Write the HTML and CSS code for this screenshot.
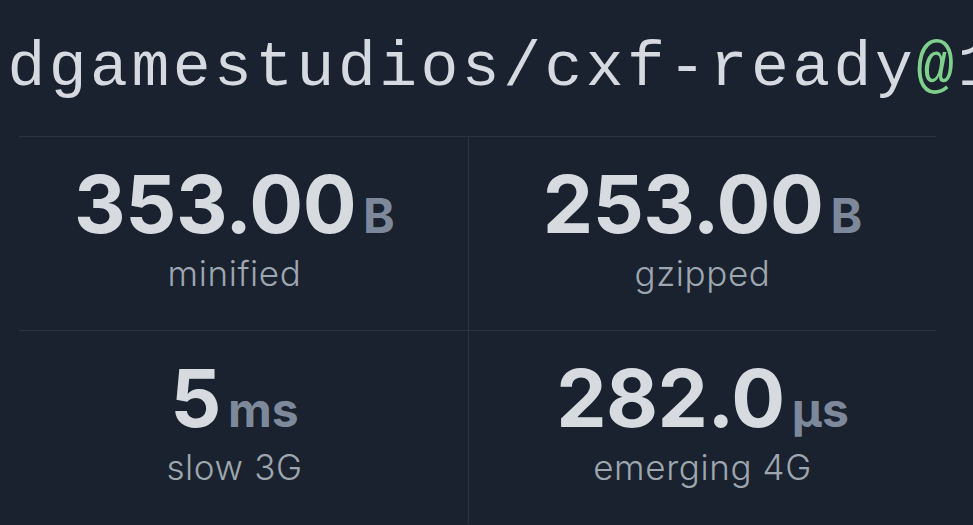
FILE: index.html
```html
<!DOCTYPE html>
<html lang="en">
<head>
<meta charset="utf-8">
<title>@bloodgamestudios/cxf-ready</title>
<link rel="stylesheet" href="styles.css">
</head>
<body>
<main class="page">
  <h1 class="pkg"><span class="pkg-name">@bloodgamestudios/cxf-ready</span><span class="pkg-at">@</span><span class="pkg-ver">1.0.0</span></h1>
  <section class="stats">
    <div class="stat stat-left">
      <div class="stat-value">353.00<span class="stat-unit">B</span></div>
      <div class="stat-label">minified</div>
    </div>
    <div class="stat stat-right">
      <div class="stat-value">253.00<span class="stat-unit">B</span></div>
      <div class="stat-label">gzipped</div>
    </div>
    <div class="stat stat-left">
      <div class="stat-value">5<span class="stat-unit">ms</span></div>
      <div class="stat-label">slow 3G</div>
    </div>
    <div class="stat stat-right">
      <div class="stat-value">282.0<span class="stat-unit">µs</span></div>
      <div class="stat-label">emerging 4G</div>
    </div>
  </section>
</main>
</body>
</html>
```
FILE: styles.css
```css
html, body {
  margin: 0;
  padding: 0;
  background: #19222e;
  overflow: hidden;
}

.page {
  width: 973px;
  height: 525px;
  overflow: hidden;
}

.pkg {
  display: flex;
  justify-content: center;
  white-space: nowrap;
  margin: 34px 0 32px;
  padding-right: 8px;
  font-family: "Liberation Mono", monospace;
  font-weight: 400;
  font-size: 63px;
  line-height: 70px;
  letter-spacing: 3.5px;
  color: #d6dae0;
}

.pkg-at {
  color: #7fd08c;
}

.stats {
  display: grid;
  grid-template-columns: 449px 468px;
  margin-left: 19px;
  width: 917px;
}

.stat {
  border-top: 1px solid #2b3542;
  padding: 27px 0 37px;
  text-align: center;
}

.stat-left {
  padding-right: 18px;
}

.stat-right {
  border-left: 1px solid #2b3542;
}

.stat-value {
  font-family: Inter, "Liberation Sans", sans-serif;
  font-weight: 700;
  font-size: 80px;
  line-height: 80px;
  color: #d7dbe0;
  letter-spacing: -0.5px;
}

.stat-unit {
  font-size: 48px;
  line-height: 1;
  color: #7d899b;
  margin-left: 7px;
  letter-spacing: 0;
}

.stat-label {
  margin-top: 9px;
  font-family: Inter, "Liberation Sans", sans-serif;
  font-weight: 300;
  font-size: 35px;
  line-height: 40px;
  letter-spacing: 0.6px;
  color: #9ea6b0;
}
```
